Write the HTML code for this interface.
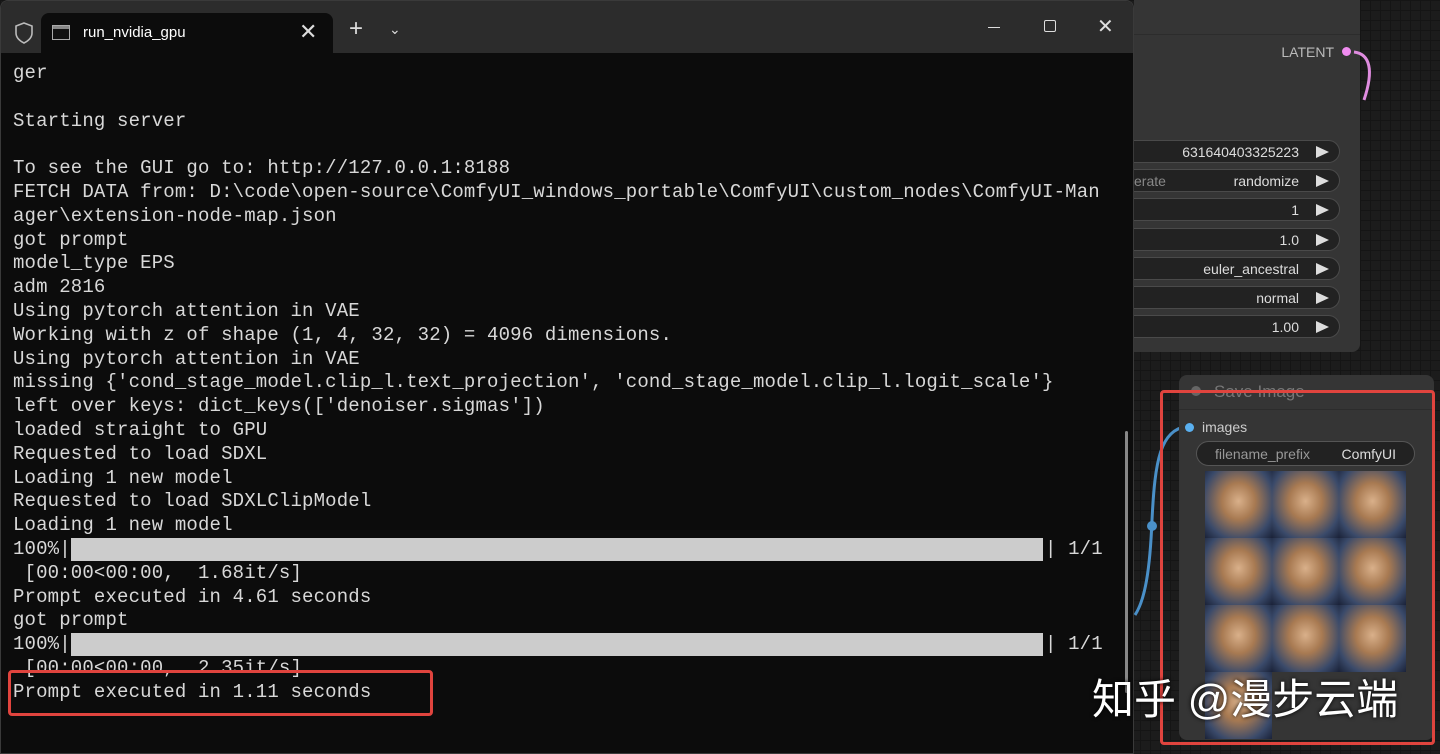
<!DOCTYPE html>
<html><head><meta charset="utf-8"><style>
*{margin:0;padding:0;box-sizing:border-box}
body{width:1440px;height:754px;overflow:hidden;background:#1c1c1c;position:relative;font-family:"Liberation Sans",sans-serif;
background-image:linear-gradient(#151515 1px,transparent 1px),linear-gradient(90deg,#151515 1px,transparent 1px);background-size:10px 10px}
.term{position:absolute;left:0;top:0;width:1134px;height:754px;background:#0c0c0c;border:1px solid #3a3a3a;border-radius:8px 8px 0 0;overflow:hidden}
.bar{position:absolute;left:0;top:0;width:100%;height:52px;background:#2c2c2c}
.tab{position:absolute;left:40px;top:12px;width:292px;height:40px;background:#0c0c0c;border-radius:8px 8px 0 0}
.tab .t{position:absolute;left:42px;top:11px;color:#fff;font-size:15px}
pre,.m{font-family:"Liberation Mono",monospace;font-size:19px;line-height:23.8px;color:#d8d8d8;letter-spacing:0.16px}
pre{position:absolute;left:12px;top:61px}
.m{position:absolute;left:1044px}
.pb{position:absolute;left:70px;height:23px;width:972px;background:#cccccc}
.red{position:absolute;border:3px solid #e0443e;border-radius:4px}
.node{position:absolute;left:1134px;top:0;width:226px;height:352px;background:#353535;border-radius:0 0 8px 0}
.w{position:absolute;left:1134px;width:206px;height:23px;background:#222;border:1px solid #4a4a4a;border-left:none;border-radius:0 12px 12px 0;color:#ddd;font-size:14px;text-align:right;padding:3px 40px 0 0}
.w:after{content:"";position:absolute;right:10px;top:5px;border-left:13px solid #ddd;border-top:6px solid transparent;border-bottom:6px solid transparent}
.save{position:absolute;left:1179px;top:375px;width:255px;height:365px;background:#353535;border-radius:8px}
.cat{position:absolute;width:67px;height:67px;background:radial-gradient(ellipse at 50% 45%,#d9b08a 0,#a87a52 35%,#3a4a6a 75%,#1a2238 100%)}
.wm{position:absolute;left:1092px;top:666px;color:#fff;font-size:42px;font-family:"Liberation Sans","Noto Sans CJK SC",sans-serif;text-shadow:0 0 4px #000}
</style></head><body>
<div class="term">
 <div class="bar">
  <svg style="position:absolute;left:13px;top:21px" width="20" height="22" viewBox="0 0 20 22"><path d="M10 1 L18 4 V11 C18 16 14 19 10 21 C6 19 2 16 2 11 V4 Z" fill="none" stroke="#bbb" stroke-width="1.6"/></svg>
  <div class="tab"><svg style="position:absolute;left:11px;top:12px" width="18" height="15"><rect x=".5" y=".5" width="17" height="14" fill="#111" stroke="#aaa"/><rect x="1" y="1" width="16" height="3" fill="#888"/></svg><span class="t">run_nvidia_gpu</span>
  <span style="position:absolute;left:258px;top:6px;color:#ddd;font-size:22px">✕</span></div>
  <span style="position:absolute;left:348px;top:16px;color:#ddd;font-size:24px;line-height:24px">+</span>
  <span style="position:absolute;left:388px;top:20px;color:#ddd;font-size:14px">⌄</span>
  <div style="position:absolute;left:987px;top:26px;width:12px;height:1px;background:#ddd"></div>
  <div style="position:absolute;left:1043px;top:19px;width:12px;height:12px;border:1px solid #ddd;border-radius:2px"></div>
  <span style="position:absolute;left:1096px;top:13px;color:#ddd;font-size:20px">✕</span>
 </div>
<pre>ger

Starting server

To see the GUI go to: http://127.0.0.1:8188
FETCH DATA from: D:\code\open-source\ComfyUI_windows_portable\ComfyUI\custom_nodes\ComfyUI-Man
ager\extension-node-map.json
got prompt
model_type EPS
adm 2816
Using pytorch attention in VAE
Working with z of shape (1, 4, 32, 32) = 4096 dimensions.
Using pytorch attention in VAE
missing {'cond_stage_model.clip_l.text_projection', 'cond_stage_model.clip_l.logit_scale'}
left over keys: dict_keys(['denoiser.sigmas'])
loaded straight to GPU
Requested to load SDXL
Loading 1 new model
Requested to load SDXLClipModel
Loading 1 new model
100%|
 [00:00&lt;00:00,  1.68it/s]
Prompt executed in 4.61 seconds
got prompt
100%|
 [00:00&lt;00:00,  2.35it/s]
Prompt executed in 1.11 seconds</pre>
 <div class="pb" style="top:537px"></div>
 <div class="pb" style="top:632px"></div>
 <div class="m" style="top:537px">| 1/1</div>
 <div class="m" style="top:632px">| 1/1</div>
 <div style="position:absolute;left:1124px;top:430px;width:3px;height:262px;background:#888;border-radius:2px"></div>
</div>
<div class="red" style="left:8px;top:670px;width:425px;height:46px"></div>
<div class="node">
 <div style="position:absolute;left:0;top:34px;width:226px;height:1px;background:#2c2c2c"></div>
 <span style="position:absolute;right:26px;top:44px;color:#bbb;font-size:14px">LATENT</span>
 <div style="position:absolute;right:9px;top:47px;width:9px;height:9px;border-radius:50%;background:#f08cf0"></div>
</div>
<svg style="position:absolute;left:1350px;top:40px" width="40" height="70"><path d="M4 12 C20 14 24 30 14 60" fill="none" stroke="#e08ce0" stroke-width="3"/></svg>
<div class="w" style="top:140px">631640403325223</div>
<div class="w" style="top:169px"><span style="position:absolute;left:0;color:#888">erate</span>randomize</div>
<div class="w" style="top:198px">1</div>
<div class="w" style="top:228px">1.0</div>
<div class="w" style="top:257px">euler_ancestral</div>
<div class="w" style="top:286px">normal</div>
<div class="w" style="top:315px">1.00</div>
<svg style="position:absolute;left:1130px;top:420px" width="60" height="200"><path d="M58 6 C30 10 25 40 22 100 C20 150 15 180 5 195" fill="none" stroke="#4a90c8" stroke-width="3"/><circle cx="22" cy="106" r="5" fill="#4a90c8"/></svg>
<div class="save">
 <div style="position:absolute;left:12px;top:11px;width:10px;height:10px;border-radius:50%;background:#666"></div>
 <span style="position:absolute;left:35px;top:7px;color:#777;font-size:17px">Save Image</span>
 <div style="position:absolute;left:0;top:34px;width:255px;height:1px;background:#2c2c2c"></div>
 <div style="position:absolute;left:6px;top:48px;width:9px;height:9px;border-radius:50%;background:#5ab0f0"></div>
 <span style="position:absolute;left:23px;top:44px;color:#ccc;font-size:14px">images</span>
 <div style="position:absolute;left:17px;top:66px;width:219px;height:25px;background:#222;border:1px solid #555;border-radius:13px;font-size:14px;padding-top:4px"><span style="position:absolute;left:18px;color:#999">filename_prefix</span><span style="position:absolute;right:18px;color:#ddd">ComfyUI</span></div>
</div>
<div class="cat" style="left:1205px;top:471px"></div><div class="cat" style="left:1272px;top:471px"></div><div class="cat" style="left:1339px;top:471px"></div>
<div class="cat" style="left:1205px;top:538px"></div><div class="cat" style="left:1272px;top:538px"></div><div class="cat" style="left:1339px;top:538px"></div>
<div class="cat" style="left:1205px;top:605px"></div><div class="cat" style="left:1272px;top:605px"></div><div class="cat" style="left:1339px;top:605px"></div>
<div class="cat" style="left:1205px;top:672px"></div>
<div class="red" style="left:1160px;top:390px;width:275px;height:355px"></div>
<div class="wm">知乎 @漫步云端</div>
</body></html>
